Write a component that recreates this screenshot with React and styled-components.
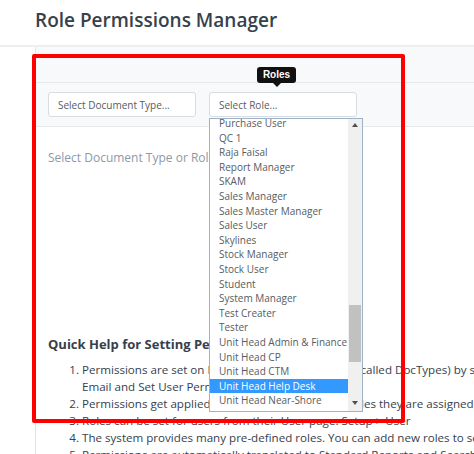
import React from "react";
import styled, { createGlobalStyle } from "styled-components";

const Global = createGlobalStyle`
  html, body { margin: 0; padding: 0; overflow: hidden; background: #fff; }
  body { font-family: "Open Sans", "Noto Sans", sans-serif; color: #36414c; }
  * { box-sizing: border-box; }
`;

const Page = styled.div`
  position: relative;
  width: 474px;
  height: 454px;
  overflow: hidden;
`;

const Head = styled.div`
  height: 47px;
  padding: 6px 0 0 35px;
  border-bottom: 2px solid #eceff1;
`;

const Title = styled.h1`
  margin: 0;
  font-size: 19px;
  font-weight: 600;
  line-height: 28px;
  color: #36414c;
  white-space: nowrap;
`;

const Layout = styled.div`
  margin-left: 35px;
  width: 900px;
  border-left: 1px solid #e3e6e9;
  min-height: 420px;
`;

const Strip = styled.div`
  height: 36px;
  background: #f7f9fb;
  border-bottom: 1px solid #e6e9ec;
`;

const FilterBar = styled.div`
  display: flex;
  gap: 13px;
  padding: 9px 12px 0;
  height: 44px;
  background: #f7f9fb;
  border-bottom: 1px solid #e6e9ec;
`;

const Field = styled.div`
  width: 148px;
  height: 25px;
  background: #fff;
  border: 1px solid #d8dde2;
  border-radius: 3px;
  padding-left: 9px;
  font-size: 10px;
  line-height: 24px;
  color: #555c63;
  white-space: nowrap;
`;

const Body = styled.div`
  padding: 22px 12px 0;
`;

const Empty = styled.div`
  font-size: 12px;
  line-height: 17px;
  color: #8d99a6;
  height: 186px;
  white-space: nowrap;
`;

const HelpTitle = styled.h4`
  margin: 0 0 8px;
  font-size: 13px;
  font-weight: 700;
  line-height: 18px;
  color: #36414c;
  white-space: nowrap;
`;

const HelpList = styled.ol`
  margin: 0;
  padding-left: 34px;
  font-size: 11.6px;
  line-height: 17px;
  color: #36414c;
  white-space: nowrap;
`;

const Tip = styled.div`
  position: absolute;
  left: 257px;
  top: 67px;
  width: 39px;
  height: 16px;
  background: #111;
  color: #fff;
  border-radius: 3px;
  font-family: "Liberation Sans", Arial, sans-serif;
  font-weight: 700;
  font-size: 10px;
  line-height: 16px;
  text-align: center;
  &::after {
    content: "";
    position: absolute;
    left: 50%;
    bottom: -4px;
    margin-left: -4px;
    border-left: 4px solid transparent;
    border-right: 4px solid transparent;
    border-top: 4px solid #111;
  }
`;

const Listbox = styled.div`
  position: absolute;
  left: 209px;
  top: 118px;
  width: 154px;
  height: 294px;
  background: #fff;
  border: 1px solid #9fb3c8;
  overflow: hidden;
  display: flex;
`;

const Options = styled.div`
  flex: 1;
  min-width: 0;
  margin-top: -3px;
`;

const Option = styled.div`
  height: 14.6px;
  padding-left: 9px;
  font-size: 10px;
  line-height: 14.6px;
  white-space: nowrap;
  overflow: hidden;
  color: ${(p) => (p.$selected ? "#fff" : "#555c63")};
  background: ${(p) => (p.$selected ? "#3399ff" : "transparent")};
`;

const Scrollbar = styled.div`
  width: 14px;
  flex: none;
  background: #f0f0f0;
  position: relative;
  display: flex;
  flex-direction: column;
  justify-content: space-between;
  align-items: center;
  padding: 4px 0 6px;
`;

const Arrow = styled.div`
  width: 0;
  height: 0;
  border-left: 3.5px solid transparent;
  border-right: 3.5px solid transparent;
  ${(p) =>
    p.$down
      ? "border-top: 4px solid #505050;"
      : "border-bottom: 4px solid #505050;"}
`;

const Thumb = styled.div`
  position: absolute;
  left: 1px;
  right: 1px;
  top: 186px;
  height: 57px;
  background: #c1c1c1;
`;

const Annotation = styled.div`
  position: absolute;
  left: 32px;
  top: 54px;
  width: 373px;
  height: 369px;
  border: 4.5px solid #ff0000;
  border-radius: 2px;
  pointer-events: none;
`;

const roles = [
  "Purchase User",
  "QC 1",
  "Raja Faisal",
  "Report Manager",
  "SKAM",
  "Sales Manager",
  "Sales Master Manager",
  "Sales User",
  "Skylines",
  "Stock Manager",
  "Stock User",
  "Student",
  "System Manager",
  "Test Creater",
  "Tester",
  "Unit Head Admin & Finance",
  "Unit Head CP",
  "Unit Head CTM",
  "Unit Head Help Desk",
  "Unit Head Near-Shore",
];

export default function App() {
  return (
    <Page>
      <Global />
      <Head>
        <Title>Role Permissions Manager</Title>
      </Head>
      <Layout>
        <Strip />
        <FilterBar>
          <Field>Select Document Type...</Field>
          <Field>Select Role...</Field>
        </FilterBar>
        <Body>
          <Empty>Select Document Type or Role to start.</Empty>
          <HelpTitle>Quick Help for Setting Permissions</HelpTitle>
          <HelpList>
            <li>
              Permissions are set on Roles and Document Types (called DocTypes) by setting rights like Read, Write, Create, Delete, Submit, Cancel, Amend, Report, Import, Export, Print,
              <br />
              Email and Set User Permissions.
            </li>
            <li>Permissions get applied on Users based on what Roles they are assigned.</li>
            <li>Roles can be set for users from their User page. Setup &gt; User</li>
            <li>The system provides many pre-defined roles. You can add new roles to set finer permissions.</li>
            <li>Permissions are automatically translated to Standard Reports and Searches.</li>
          </HelpList>
        </Body>
      </Layout>
      <Tip>Roles</Tip>
      <Listbox>
        <Options>
          {roles.map((r) => (
            <Option key={r} $selected={r === "Unit Head Help Desk"}>
              {r}
            </Option>
          ))}
        </Options>
        <Scrollbar>
          <Arrow />
          <Thumb />
          <Arrow $down />
        </Scrollbar>
      </Listbox>
      <Annotation />
    </Page>
  );
}
